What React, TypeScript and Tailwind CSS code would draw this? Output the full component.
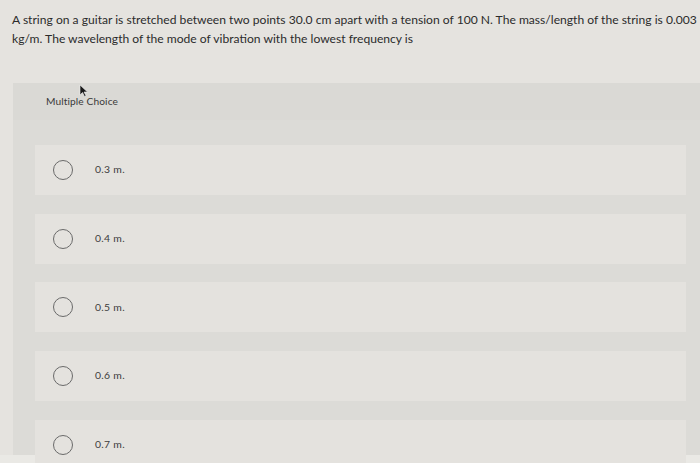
import React from "react";

const options = ["0.3 m.", "0.4 m.", "0.5 m.", "0.6 m.", "0.7 m."];

function Cursor() {
  return (
    <svg
      className="absolute left-[79px] top-[84px]"
      width="9"
      height="13"
      viewBox="0 0 9 13"
    >
      <path d="M1 1 L1 11 L3.5 8.5 L5.5 12.5 L7 11.8 L5 8 L8.5 8 Z" fill="#1a1a1a" stroke="#f2f2f2" strokeWidth="0.6" />
    </svg>
  );
}

export default function App() {
  return (
    <div
      className="relative w-[700px] h-[463px] overflow-hidden bg-[#e5e3df]"
      style={{ fontFamily: "Lato, 'Open Sans', sans-serif" }}
    >
      <p className="pl-[12px] pt-[10px] text-[12.1px] leading-[19px] text-[#2b2b2b] whitespace-nowrap">
        A string on a guitar is stretched between two points 30.0 cm apart with a tension of 100 N. The mass/length of the string is 0.003
        <br />
        kg/m. The wavelength of the mode of vibration with the lowest frequency is
      </p>

      <div className="mt-[35px] ml-[13px] h-[372px] bg-[#dcdbd7]">
        <div className="h-[37px] flex items-center pl-[33px] text-[10.2px] tracking-[0.1px] text-[#3a3a3a] bg-[#dad9d5]">
          Multiple Choice
        </div>
        <div className="pt-[25px] pl-[22px] pr-[14px] flex flex-col gap-[18.7px]">
          {options.map((o) => (
            <div key={o} className="h-[50px] flex items-center bg-[#e4e2de]">
              <span className="ml-[18px] w-[20px] h-[20px] rounded-full border-[1.5px] border-[#6a6a6a]" />
              <span className="ml-[22px] text-[10.4px] tracking-[0.3px] text-[#3c3c3c]">{o}</span>
            </div>
          ))}
        </div>
      </div>
      <div className="h-[8px] bg-[#eae9e5]" />
      <Cursor />
    </div>
  );
}
